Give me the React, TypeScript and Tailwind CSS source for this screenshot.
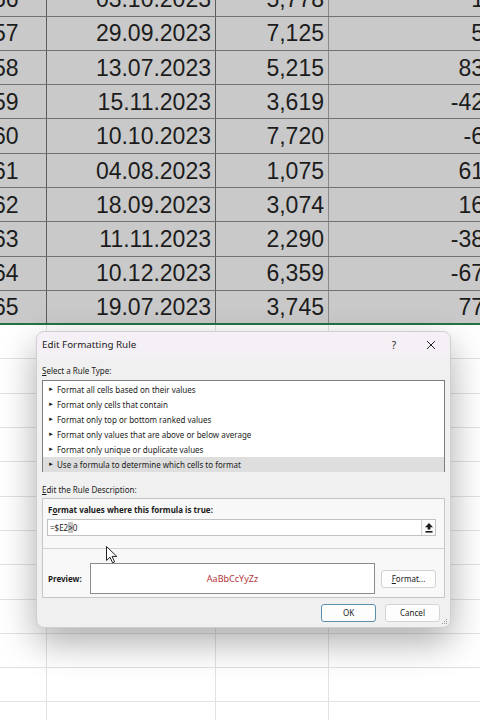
import React from "react";

type Row = { a: string; date: string; amount: string; diff: string };

const rows: Row[] = [
  { a: "56", date: "03.10.2023", amount: "5,778", diff: "1" },
  { a: "57", date: "29.09.2023", amount: "7,125", diff: "5" },
  { a: "58", date: "13.07.2023", amount: "5,215", diff: "83" },
  { a: "59", date: "15.11.2023", amount: "3,619", diff: "-42" },
  { a: "60", date: "10.10.2023", amount: "7,720", diff: "-6" },
  { a: "61", date: "04.08.2023", amount: "1,075", diff: "61" },
  { a: "62", date: "18.09.2023", amount: "3,074", diff: "16" },
  { a: "63", date: "11.11.2023", amount: "2,290", diff: "-38" },
  { a: "64", date: "10.12.2023", amount: "6,359", diff: "-67" },
  { a: "65", date: "19.07.2023", amount: "3,745", diff: "77" },
];

const ruleTypes = [
  "Format all cells based on their values",
  "Format only cells that contain",
  "Format only top or bottom ranked values",
  "Format only values that are above or below average",
  "Format only unique or duplicate values",
  "Use a formula to determine which cells to format",
];

function SelectedRow({ row, last }: { row: Row; last: boolean }) {
  return (
    <div
      className={`flex h-[34.3px] items-center bg-[#c9c9c9] text-[23px] text-[#1c1c1c] ${
        last ? "border-b-2 border-[#217346]" : "border-b border-[#727272]"
      }`}
    >
      <div className="flex h-full w-[47px] shrink-0 items-center overflow-hidden border-r border-[#5c5c5c]">
        <span className="-ml-[7px] whitespace-nowrap pt-[1px]">{row.a}</span>
      </div>
      <div className="flex h-full w-[169px] shrink-0 items-center justify-end border-r border-[#5c5c5c] pr-[4px] pt-[1px]">
        {row.date}
      </div>
      <div className="flex h-full w-[113px] shrink-0 items-center justify-end border-r border-[#8a8a8a] pr-[4px] pt-[1px]">
        {row.amount}
      </div>
      <div className="flex h-full w-[151px] shrink-0 items-center justify-end overflow-hidden pt-[1px]">
        <span className="-mr-[4px] whitespace-nowrap">{row.diff}</span>
      </div>
    </div>
  );
}

function EmptyRow() {
  return (
    <div className="flex h-[34.3px] border-b border-[#e2e2e2] bg-white">
      <div className="w-[47px] shrink-0 border-r border-[#e2e2e2]" />
      <div className="w-[169px] shrink-0 border-r border-[#e2e2e2]" />
      <div className="w-[113px] shrink-0 border-r border-[#e2e2e2]" />
      <div className="w-[151px] shrink-0" />
    </div>
  );
}

function CollapseIcon() {
  return (
    <svg width="8" height="10" viewBox="0 0 8 10" aria-hidden="true">
      <path d="M4 0 L8 4.2 L5.4 4.2 L5.4 6.6 L2.6 6.6 L2.6 4.2 L0 4.2 Z" fill="#1a1a1a" />
      <rect x="0.5" y="8" width="7" height="1.6" fill="#1a1a1a" />
    </svg>
  );
}

function Cursor() {
  return (
    <svg width="12" height="18" viewBox="0 0 12 18" aria-hidden="true">
      <path
        d="M0.5 0.5 L0.5 14.5 L4 11.2 L6.6 16.8 L8.6 15.9 L6.1 10.4 L10.8 10.4 Z"
        fill="#ffffff"
        stroke="#222222"
        strokeWidth="1"
        strokeLinejoin="round"
      />
    </svg>
  );
}

function Dialog() {
  return (
    <div className="absolute left-[36px] top-[331px] w-[415px] h-[297px] rounded-[8px] border border-[#cfcfcf] bg-[#f0f0f0] shadow-[0_14px_36px_rgba(0,0,0,0.33)] font-['Noto_Sans','Open_Sans',sans-serif] text-[#1b1b1b]">
      <div className="flex h-[26px] items-center rounded-t-[8px] bg-[#f5f0f5] pl-[5px] pr-[14px]">
        <span className="text-[9.8px]">Edit Formatting Rule</span>
        <span className="ml-auto text-[10px]">?</span>
        <svg className="ml-[30px]" width="10" height="10" viewBox="0 0 10 10" aria-hidden="true">
          <path d="M1 1 L9 9 M9 1 L1 9" stroke="#222" strokeWidth="1" />
        </svg>
      </div>

      <div className="px-[5px]">
        <div className="mt-[7px] h-[12px] text-[8px] leading-[12px]">
          <span className="underline">S</span>elect a Rule Type:
        </div>
        <div className="mt-[3px] h-[92px] border border-[#7c7c7c] bg-white pt-[1px]">
          {ruleTypes.map((t, i) => (
            <div
              key={t}
              className={`flex h-[15px] items-center pl-[5px] text-[8px] ${
                i === ruleTypes.length - 1 ? "bg-[#dedede]" : ""
              }`}
            >
              <span className="mr-[3px] text-[6px]">►</span>
              {t}
            </div>
          ))}
        </div>

        <div className="mt-[12px] h-[12px] text-[8px] leading-[12px]">
          <span className="underline">E</span>dit the Rule Description:
        </div>
        <div className="mt-[2px] h-[100px] border border-[#c6c6c6] bg-[#f8f8f8]">
          <div className="px-[5px] pt-[5px]">
            <div className="h-[12px] text-[8px] font-bold leading-[12px]">
              F<span className="underline">o</span>rmat values where this formula is true:
            </div>
          </div>
          <div className="mt-[3px] ml-[4px] mr-[8px] flex h-[17px] items-center border border-[#c2c2c2] bg-white pl-[2px]">
            <span className="text-[8px]">
              =$E2<span className="bg-[#c4c4c4]">&gt;</span>0
            </span>
            <div className="ml-auto flex h-full w-[14px] items-center justify-center border-l border-[#d4d4d4] bg-[#fafafa]">
              <CollapseIcon />
            </div>
          </div>
          <div className="mt-[12px] h-px bg-[#d2d2d2]" />
          <div className="mt-[14px] flex items-center pl-[5px] pr-[8px]">
            <span className="w-[42px] text-[8px] font-bold">Preview:</span>
            <div className="flex h-[31px] w-[285px] items-center justify-center border border-[#8c8c8c] bg-white text-[9px] text-[#b5353a]">
              AaBbCcYyZz
            </div>
            <div className="ml-auto flex h-[18px] w-[55px] items-center justify-center rounded-[3px] border border-[#d2d2d2] bg-[#fdfdfd] text-[8px]">
              <span className="underline">F</span>ormat...
            </div>
          </div>
        </div>

        <div className="mt-[6px] flex justify-end gap-[9px] pr-[5px]">
          <div className="flex h-[18px] w-[55px] items-center justify-center rounded-[3px] border border-[#5b8fae] bg-[#fdfdfd] text-[8px]">
            OK
          </div>
          <div className="flex h-[18px] w-[55px] items-center justify-center rounded-[3px] border border-[#d4d4d4] bg-[#fdfdfd] text-[8px]">
            Cancel
          </div>
        </div>
      </div>

      <svg className="absolute bottom-[2px] right-[2px]" width="6" height="6" viewBox="0 0 6 6" aria-hidden="true">
        <rect x="4" y="0" width="1" height="1" fill="#9a9a9a" />
        <rect x="2" y="2" width="1" height="1" fill="#9a9a9a" />
        <rect x="4" y="2" width="1" height="1" fill="#9a9a9a" />
        <rect x="0" y="4" width="1" height="1" fill="#9a9a9a" />
        <rect x="2" y="4" width="1" height="1" fill="#9a9a9a" />
        <rect x="4" y="4" width="1" height="1" fill="#9a9a9a" />
      </svg>
    </div>
  );
}

export default function App() {
  return (
    <div className="relative h-[720px] w-[480px] overflow-hidden bg-white font-['Liberation_Sans',Arial,sans-serif]">
      <div className="-mt-[17.8px]">
        {rows.map((r, i) => (
          <SelectedRow key={r.a} row={r} last={i === rows.length - 1} />
        ))}
        {Array.from({ length: 12 }).map((_, i) => (
          <EmptyRow key={i} />
        ))}
      </div>

      <Dialog />

      <div className="absolute left-[106px] top-[546px]">
        <Cursor />
      </div>
    </div>
  );
}
